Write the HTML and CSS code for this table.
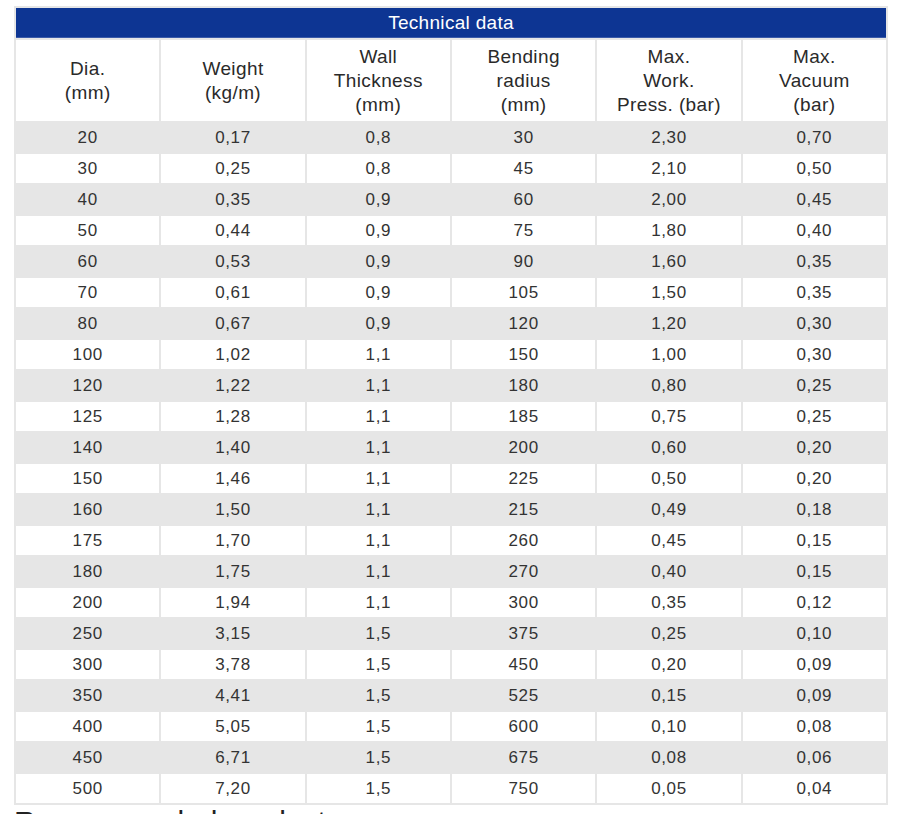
FILE: index.html
```html
<!DOCTYPE html>
<html>
<head>
<meta charset="utf-8">
<link rel="stylesheet" href="styles.css">
</head>
<body>
<table class="tech">
  <tr><th class="title" colspan="6">Technical data</th></tr>
  <tr class="head">
    <td>Dia.<br>(mm)</td>
    <td>Weight<br>(kg/m)</td>
    <td>Wall<br>Thickness<br>(mm)</td>
    <td>Bending<br>radius<br>(mm)</td>
    <td>Max.<br>Work.<br>Press. (bar)</td>
    <td>Max.<br>Vacuum<br>(bar)</td>
  </tr>
  <tr class="g"><td>20</td><td>0,17</td><td>0,8</td><td>30</td><td>2,30</td><td>0,70</td></tr>
  <tr><td>30</td><td>0,25</td><td>0,8</td><td>45</td><td>2,10</td><td>0,50</td></tr>
  <tr class="g"><td>40</td><td>0,35</td><td>0,9</td><td>60</td><td>2,00</td><td>0,45</td></tr>
  <tr><td>50</td><td>0,44</td><td>0,9</td><td>75</td><td>1,80</td><td>0,40</td></tr>
  <tr class="g"><td>60</td><td>0,53</td><td>0,9</td><td>90</td><td>1,60</td><td>0,35</td></tr>
  <tr><td>70</td><td>0,61</td><td>0,9</td><td>105</td><td>1,50</td><td>0,35</td></tr>
  <tr class="g"><td>80</td><td>0,67</td><td>0,9</td><td>120</td><td>1,20</td><td>0,30</td></tr>
  <tr><td>100</td><td>1,02</td><td>1,1</td><td>150</td><td>1,00</td><td>0,30</td></tr>
  <tr class="g"><td>120</td><td>1,22</td><td>1,1</td><td>180</td><td>0,80</td><td>0,25</td></tr>
  <tr><td>125</td><td>1,28</td><td>1,1</td><td>185</td><td>0,75</td><td>0,25</td></tr>
  <tr class="g"><td>140</td><td>1,40</td><td>1,1</td><td>200</td><td>0,60</td><td>0,20</td></tr>
  <tr><td>150</td><td>1,46</td><td>1,1</td><td>225</td><td>0,50</td><td>0,20</td></tr>
  <tr class="g"><td>160</td><td>1,50</td><td>1,1</td><td>215</td><td>0,49</td><td>0,18</td></tr>
  <tr><td>175</td><td>1,70</td><td>1,1</td><td>260</td><td>0,45</td><td>0,15</td></tr>
  <tr class="g"><td>180</td><td>1,75</td><td>1,1</td><td>270</td><td>0,40</td><td>0,15</td></tr>
  <tr><td>200</td><td>1,94</td><td>1,1</td><td>300</td><td>0,35</td><td>0,12</td></tr>
  <tr class="g"><td>250</td><td>3,15</td><td>1,5</td><td>375</td><td>0,25</td><td>0,10</td></tr>
  <tr><td>300</td><td>3,78</td><td>1,5</td><td>450</td><td>0,20</td><td>0,09</td></tr>
  <tr class="g"><td>350</td><td>4,41</td><td>1,5</td><td>525</td><td>0,15</td><td>0,09</td></tr>
  <tr><td>400</td><td>5,05</td><td>1,5</td><td>600</td><td>0,10</td><td>0,08</td></tr>
  <tr class="g"><td>450</td><td>6,71</td><td>1,5</td><td>675</td><td>0,08</td><td>0,06</td></tr>
  <tr><td>500</td><td>7,20</td><td>1,5</td><td>750</td><td>0,05</td><td>0,04</td></tr>
</table>
<h2 class="rec">Recommended products</h2>
</body>
</html>
```
FILE: styles.css
```css
html, body {
  margin: 0;
  padding: 0;
  background: #ffffff;
}
body {
  padding: 6px 0 0 14px;
  font-family: "Liberation Sans", Arial, sans-serif;
  color: #333333;
}
.tech {
  width: 874px;
  border-collapse: separate;
  border-spacing: 2px;
  background: #e6e6e6;
  table-layout: fixed;
}
.tech td, .tech th {
  padding: 0;
  text-align: center;
  background: #ffffff;
}
.tech .title {
  height: 30px;
  background: #0d3593;
  color: #ffffff;
  font-size: 19px;
  font-weight: normal;
  letter-spacing: 0.3px;
  border-bottom: 1px solid #3a5aa8;
  box-sizing: border-box;
}
.tech tr td {
  height: 28px;
  padding-top: 1px;
  font-size: 17px;
  line-height: 20px;
  color: #333333;
  letter-spacing: 0.6px;
}
.tech .head td {
  height: 81px;
  padding-top: 0;
  font-size: 19px;
  line-height: 24px;
  color: #2a2a2a;
  letter-spacing: 0.4px;
}
.tech tr.g td {
  background: #e6e6e6;
}
.rec {
  margin: 0;
  font-size: 30px;
  font-weight: normal;
  line-height: 34px;
  color: #222222;
}
```
